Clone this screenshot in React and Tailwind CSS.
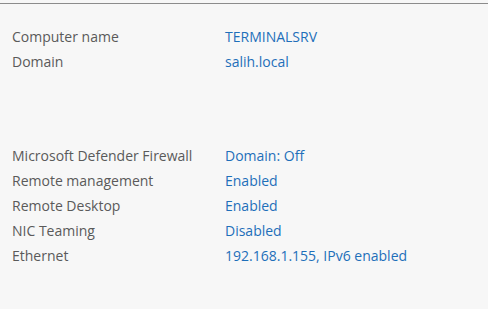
import React from "react";

const top = [
  ["Computer name", "TERMINALSRV"],
  ["Domain", "salih.local"],
];

const bottom = [
  ["Microsoft Defender Firewall", "Domain: Off"],
  ["Remote management", "Enabled"],
  ["Remote Desktop", "Enabled"],
  ["NIC Teaming", "Disabled"],
  ["Ethernet", "192.168.1.155, IPv6 enabled"],
];

const Row = ({ label, value }) => (
  <div className="flex h-[25px] items-center">
    <span className="w-[213px] text-[#5a5a5a]">{label}</span>
    <span className="text-[#1e6fba]">{value}</span>
  </div>
);

export default function App() {
  return (
    <div className="w-[488px] h-[309px] bg-[#f7f7f7] overflow-hidden font-['Open_Sans',sans-serif] text-[14px]">
      <div className="h-[3px]" />
      <div className="h-px bg-[#8c8c8c]" />
      <div className="pl-3 pt-[20px]">
        {top.map(([l, v]) => (
          <Row key={l} label={l} value={v} />
        ))}
        <div className="h-[69px]" />
        {bottom.map(([l, v]) => (
          <Row key={l} label={l} value={v} />
        ))}
      </div>
    </div>
  );
}
